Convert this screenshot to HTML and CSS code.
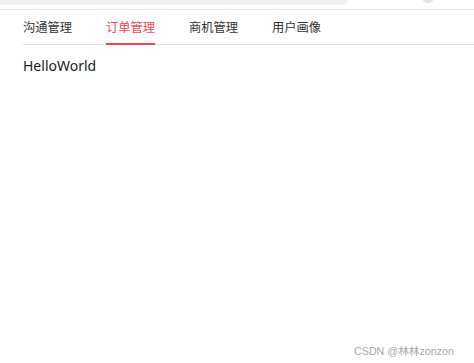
FILE: index.html
```
<!DOCTYPE html>
<html lang="zh-CN">
<head>
    <meta charset="UTF-8">
    <title>Tabs</title>
    <link rel="stylesheet" href="styles.css">
</head>
<body>
    <div class="topbar">
        <div class="search"></div>
        <div class="dot"></div>
    </div>
    <div class="page">
        <div class="tabs">
            <a href="#" class="tab">沟通管理</a>
            <a href="#" class="tab active">订单管理</a>
            <a href="#" class="tab">商机管理</a>
            <a href="#" class="tab">用户画像</a>
        </div>
        <div class="content">HelloWorld</div>
    </div>
    <div class="watermark">CSDN @林林zonzon</div>
</body>
</html>
```
FILE: styles.css
```
body {
    font-family: "Noto Sans", "Noto Sans CJK SC", sans-serif;
    background-color: #fff;
    margin: 0;
    padding: 0;
    height: 363px;
    position: relative;
    overflow: hidden;
}
.topbar {
    height: 9px;
    border-bottom: 1px solid #e6e6e6;
    position: relative;
}
.search {
    width: 348px;
    height: 5px;
    background-color: #f2f2f2;
    border-radius: 0 0 6px 0;
}
.dot {
    position: absolute;
    left: 423px;
    top: -3px;
    width: 10px;
    height: 6px;
    border-radius: 50%;
    background-color: #e4e4e4;
}
.page {
    padding: 0 0 0 23px;
}
.tabs {
    display: flex;
    gap: 34px;
    border-bottom: 1px solid #e4e4e4;
}
.tab {
    font-size: 12.25px;
    color: #333;
    text-decoration: none;
    padding: 8px 0 6px;
    line-height: 19px;
    border-bottom: 2px solid transparent;
    margin-bottom: -1px;
}
.tab.active {
    color: #f0454f;
    border-bottom-color: #f0454f;
}
.content {
    font-size: 14px;
    color: #222;
    padding-top: 11px;
}
.watermark {
    position: absolute;
    right: 20px;
    bottom: 5px;
    font-family: "Liberation Sans", "Noto Sans CJK SC", sans-serif;
    font-size: 10.7px;
    color: #a8a8a8;
}
```
